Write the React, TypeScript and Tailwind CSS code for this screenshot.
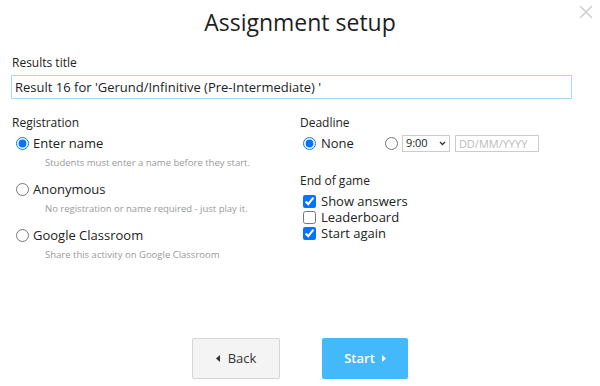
import React from "react";

function Radio({ checked }: { checked?: boolean }) {
  return (
    <input
      type="radio"
      defaultChecked={checked}
      className="m-0 h-[13px] w-[13px] accent-[#0075ff]"
    />
  );
}

function Check({ checked }: { checked?: boolean }) {
  return (
    <input
      type="checkbox"
      defaultChecked={checked}
      className="m-0 h-[13px] w-[13px] accent-[#0075ff]"
    />
  );
}

function RegOption({ label, note, checked }: { label: string; note: string; checked?: boolean }) {
  return (
    <div className="flex flex-col">
      <label className="flex items-center gap-[4px] pl-[4px] text-[13px] leading-[20px] text-[#222]">
        <Radio checked={checked} />
        {label}
      </label>
      <p className="pl-[33px] text-[9.5px] leading-[20px] text-[#999]">{note}</p>
    </div>
  );
}

export default function App() {
  return (
    <div
      className="relative h-[386px] w-[600px] bg-white px-3"
      style={{ fontFamily: "'Open Sans', 'Liberation Sans', sans-serif" }}
    >
      <button className="absolute right-[7px] top-[5px] text-[#cfcfcf]">
        <svg width="14" height="14" viewBox="0 0 14 14" stroke="currentColor" strokeWidth="1.6">
          <path d="M1 1 L13 13 M13 1 L1 13" />
        </svg>
      </button>

      <h1 className="pt-[6px] text-center text-[23px] leading-[32px] text-[#1e1e1e]">Assignment setup</h1>

      <div className="mt-[17px]">
        <p className="text-[12px] leading-[16px] text-[#222]">Results title</p>
        <input
          defaultValue="Result 16 for 'Gerund/Infinitive (Pre-Intermediate) '"
          className="mt-[4px] h-[24px] w-[561px] -ml-[1px] border border-[#a8d8f5] px-[3px] text-[13px] text-[#222] outline-none"
        />
      </div>

      <div className="mt-[16px] flex">
        <div className="w-[288px]">
          <p className="text-[12px] leading-[16px] text-[#222]">Registration</p>
          <div className="mt-[2px] flex flex-col gap-[6px]">
            <RegOption label="Enter name" note="Students must enter a name before they start." checked />
            <RegOption label="Anonymous" note="No registration or name required - just play it." />
            <RegOption label="Google Classroom" note="Share this activity on Google Classroom" />
          </div>
        </div>

        <div className="flex-1">
          <p className="text-[12px] leading-[16px] text-[#222]">Deadline</p>
          <div className="mt-[2px] flex h-[20px] items-center">
            <label className="flex items-center gap-[5px] pl-[3px] text-[13px] leading-[20px] text-[#222]">
              <Radio checked />
              None
            </label>
            <span className="ml-[31px] flex items-center">
              <Radio />
            </span>
            <div className="ml-[4px] flex h-[17px] w-[48px] items-center justify-between border border-[#ccc] px-[3px] text-[11px] text-[#222]">
              <span>9:00</span>
              <svg width="7" height="5" viewBox="0 0 7 5">
                <path d="M1 1 L3.5 3.5 L6 1" stroke="#333" strokeWidth="1.3" fill="none" />
              </svg>
            </div>
            <input
              placeholder="DD/MM/YYYY"
              className="ml-[5px] h-[17px] w-[84px] border border-[#ccc] px-[3px] text-[11px] text-[#222] outline-none placeholder:text-[#bbb]"
            />
          </div>

          <p className="mt-[20px] text-[12px] leading-[16px] text-[#222]">End of game</p>
          <div className="mt-[4px] flex flex-col">
            {[
              ["Show answers", true],
              ["Leaderboard", false],
              ["Start again", true],
            ].map(([label, on]) => (
              <label
                key={label as string}
                className="flex items-center gap-[5px] pl-[3px] text-[13px] leading-[16px] text-[#222]"
              >
                <Check checked={on as boolean} />
                {label as string}
              </label>
            ))}
          </div>
        </div>
      </div>

      <div className="absolute left-0 right-0 top-[338px] flex justify-center gap-[42px]">
        <button className="flex h-[41px] w-[88px] items-center justify-center gap-[8px] rounded-[2px] border border-[#d6d6d6] bg-[#f4f4f4] text-[13px] text-[#333]">
          <svg width="4" height="7" viewBox="0 0 4 7">
            <path d="M4 0 L0 3.5 L4 7 Z" fill="#333" />
          </svg>
          Back
        </button>
        <button className="flex h-[41px] w-[86px] items-center justify-center gap-[7px] rounded-[2px] bg-[#43b9fb] text-[13px] font-semibold text-white">
          Start
          <svg width="4" height="7" viewBox="0 0 4 7">
            <path d="M0 0 L4 3.5 L0 7 Z" fill="#fff" />
          </svg>
        </button>
      </div>
    </div>
  );
}
